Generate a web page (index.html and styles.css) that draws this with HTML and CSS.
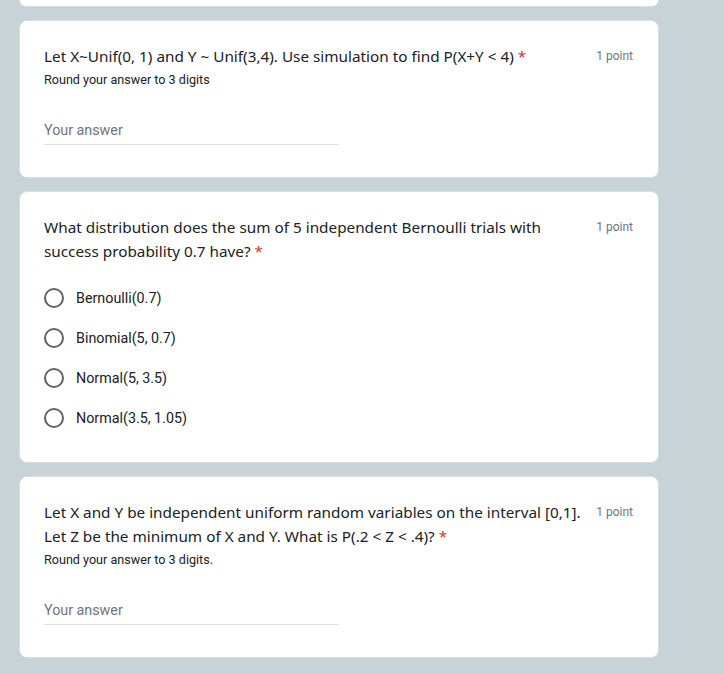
FILE: index.html
```html
<!DOCTYPE html>
<html lang="en">
<head>
<meta charset="utf-8">
<title>Quiz</title>
<link rel="stylesheet" href="styles.css">
</head>
<body>
<main class="form">
  <div class="card card-stub"></div>

  <section class="card">
    <div class="q-head">
      <div class="q-title">Let X~Unif(0, 1) and Y ~ Unif(3,4). Use simulation to find P(X+Y &lt; 4) <span class="req">*</span></div>
      <div class="q-points">1 point</div>
    </div>
    <div class="q-desc">Round your answer to 3 digits</div>
    <div class="answer"><span class="answer-text">Your answer</span></div>
  </section>

  <section class="card">
    <div class="q-head">
      <div class="q-title">What distribution does the sum of 5 independent Bernoulli trials with success probability 0.7 have? <span class="req">*</span></div>
      <div class="q-points">1 point</div>
    </div>
    <div class="options">
      <label class="option"><span class="radio"></span><span class="opt-text">Bernoulli(0.7)</span></label>
      <label class="option"><span class="radio"></span><span class="opt-text">Binomial(5, 0.7)</span></label>
      <label class="option"><span class="radio"></span><span class="opt-text">Normal(5, 3.5)</span></label>
      <label class="option"><span class="radio"></span><span class="opt-text">Normal(3.5, 1.05)</span></label>
    </div>
  </section>

  <section class="card">
    <div class="q-head">
      <div class="q-title">Let X and Y be independent uniform random variables on the interval [0,1]. Let Z be the minimum of X and Y. What is P(.2 &lt; Z &lt; .4)? <span class="req">*</span></div>
      <div class="q-points">1 point</div>
    </div>
    <div class="q-desc">Round your answer to 3 digits.</div>
    <div class="answer"><span class="answer-text">Your answer</span></div>
  </section>
</main>
</body>
</html>
```

FILE: styles.css
```css
html, body {
  margin: 0;
  padding: 0;
  background: #c8d3d8;
}

body {
  font-family: Roboto, "Liberation Sans", sans-serif;
  color: #202124;
  height: 674px;
  overflow: hidden;
}

.form {
  width: 640px;
  margin-left: 19px;
  display: flex;
  flex-direction: column;
  gap: 13px;
}

.card {
  box-sizing: border-box;
  background: #fff;
  border: 1px solid #dadce0;
  border-radius: 8px;
  padding: 23px 24px 32px 24px;
}

.card-stub {
  height: 7px;
  padding: 0;
  border-top: none;
  border-radius: 0 0 8px 8px;
}

.q-head {
  display: flex;
  align-items: flex-start;
  justify-content: space-between;
  gap: 14px;
}

.q-title {
  font-family: "Noto Sans", "Open Sans", sans-serif;
  font-size: 15.3px;
  line-height: 24px;
  color: #202124;
  max-width: 548px;
}

.req {
  color: #d93025;
  line-height: 0;
}

.q-points {
  flex: none;
  font-size: 12px;
  line-height: 24px;
  color: #70757a;
  padding-right: 1px;
}

.q-desc {
  margin-top: 4px;
  font-size: 12.6px;
  line-height: 16px;
  color: #202124;
}

.answer {
  width: 295px;
  margin-top: 32px;
  padding-bottom: 4px;
  border-bottom: 1px solid #e0e0e0;
}

.answer-text {
  display: block;
  font-size: 14.3px;
  line-height: 20px;
  color: #70757a;
}

.options {
  margin-top: 15px;
  margin-bottom: -8px;
  display: flex;
  flex-direction: column;
}

.option {
  display: flex;
  align-items: center;
  height: 40px;
  gap: 12px;
}

.radio {
  box-sizing: border-box;
  width: 20px;
  height: 20px;
  border: 2px solid #5f6368;
  border-radius: 50%;
  flex: none;
}

.opt-text {
  font-size: 14.3px;
  color: #202124;
}
```
